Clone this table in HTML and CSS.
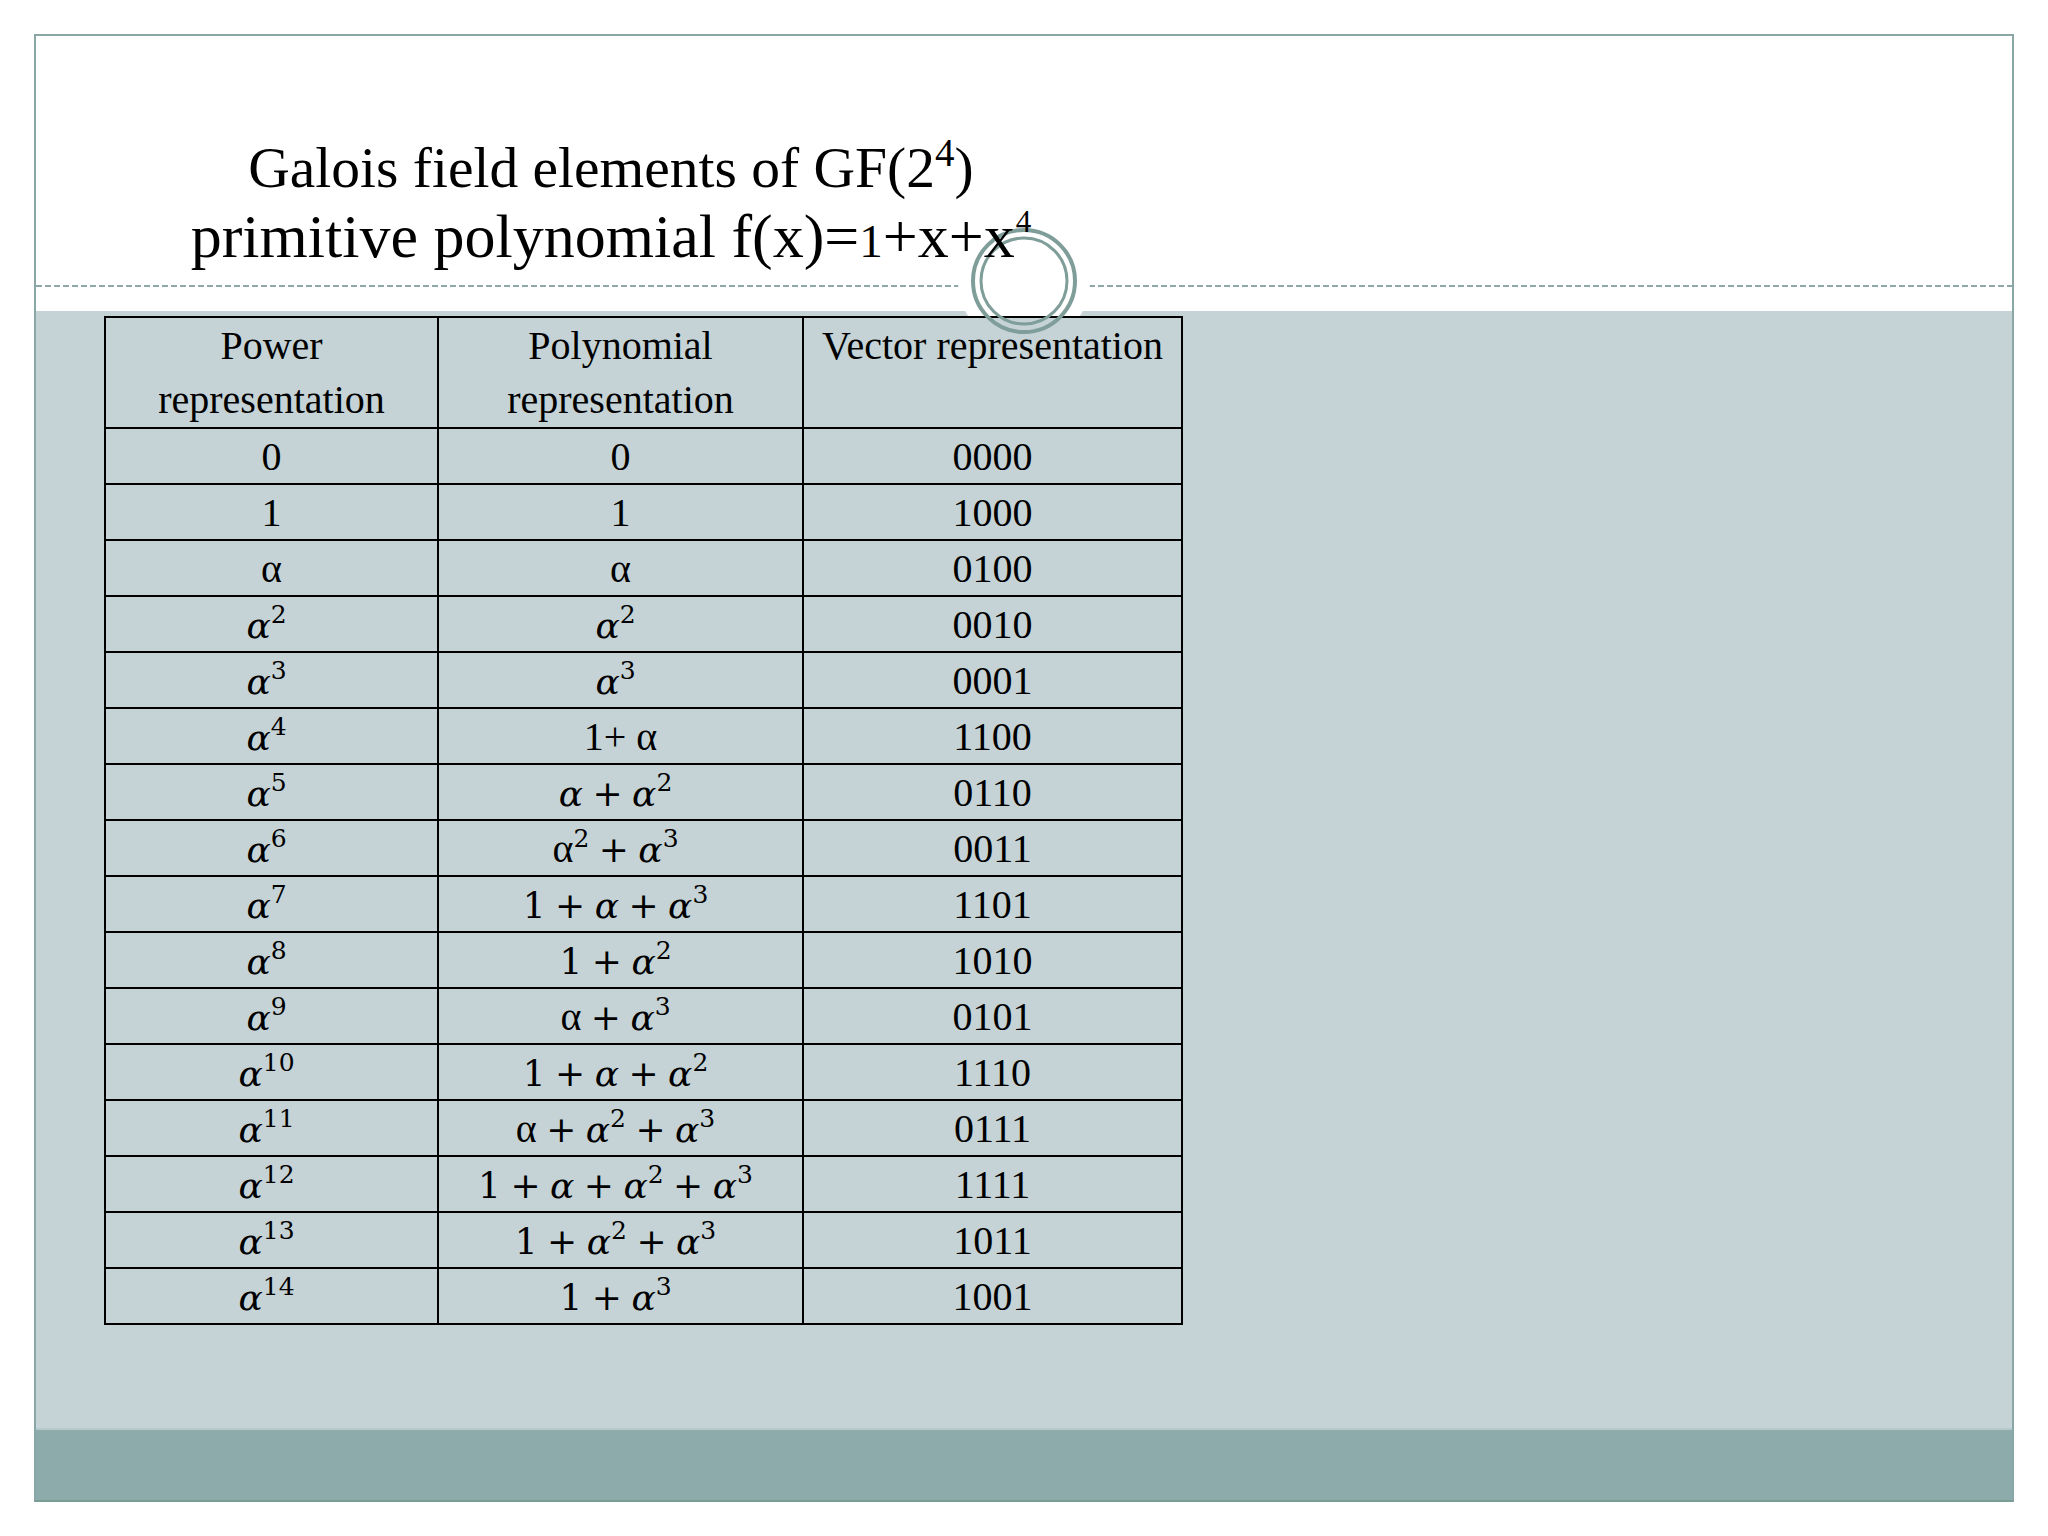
FILE: index.html
```html
<!DOCTYPE html>
<html lang="en">
<head>
<meta charset="utf-8">
<title>Galois field elements of GF(2^4)</title>
<link rel="stylesheet" href="styles.css">
</head>
<body>
<div class="slide">
  <header class="head">
    <div class="title">
      <div class="tline l1">Galois field elements of GF(2<sup class="t1">4</sup>)</div>
      <div class="tline l2">primitive polynomial f(x)=<span class="os">1</span>+x+x<sup class="t2">4</sup></div>
    </div>
    <div class="rule"></div>
  </header>
  <main class="content">
    <table class="gf">
      <colgroup><col class="c1"><col class="c2"><col class="c3"></colgroup>
      <tr class="hdr"><td>Power<br>representation</td><td>Polynomial<br>representation</td><td>Vector representation</td></tr>
      <tr><td>0</td><td>0</td><td>0000</td></tr>
      <tr><td>1</td><td>1</td><td>1000</td></tr>
      <tr><td>α</td><td>α</td><td>0100</td></tr>
      <tr><td><span class="m"><i>α</i><sup>2</sup></span></td><td><span class="m"><i>α</i><sup>2</sup></span></td><td>0010</td></tr>
      <tr><td><span class="m"><i>α</i><sup>3</sup></span></td><td><span class="m"><i>α</i><sup>3</sup></span></td><td>0001</td></tr>
      <tr><td><span class="m"><i>α</i><sup>4</sup></span></td><td>1+ α</td><td>1100</td></tr>
      <tr><td><span class="m"><i>α</i><sup>5</sup></span></td><td><span class="m"><i>α</i> + <i>α</i><sup>2</sup></span></td><td>0110</td></tr>
      <tr><td><span class="m"><i>α</i><sup>6</sup></span></td><td>α<span class="m"><sup>2</sup> + <i>α</i><sup>3</sup></span></td><td>0011</td></tr>
      <tr><td><span class="m"><i>α</i><sup>7</sup></span></td><td><span class="m">1 + <i>α</i> + <i>α</i><sup>3</sup></span></td><td>1101</td></tr>
      <tr><td><span class="m"><i>α</i><sup>8</sup></span></td><td><span class="m">1 + <i>α</i><sup>2</sup></span></td><td>1010</td></tr>
      <tr><td><span class="m"><i>α</i><sup>9</sup></span></td><td>α<span class="m"> + <i>α</i><sup>3</sup></span></td><td>0101</td></tr>
      <tr><td><span class="m"><i>α</i><sup>10</sup></span></td><td><span class="m">1 + <i>α</i> + <i>α</i><sup>2</sup></span></td><td>1110</td></tr>
      <tr><td><span class="m"><i>α</i><sup>11</sup></span></td><td>α<span class="m"> + <i>α</i><sup>2</sup> + <i>α</i><sup>3</sup></span></td><td>0111</td></tr>
      <tr><td><span class="m"><i>α</i><sup>12</sup></span></td><td><span class="m">1 + <i>α</i> + <i>α</i><sup>2</sup> + <i>α</i><sup>3</sup></span></td><td>1111</td></tr>
      <tr><td><span class="m"><i>α</i><sup>13</sup></span></td><td><span class="m">1 + <i>α</i><sup>2</sup> + <i>α</i><sup>3</sup></span></td><td>1011</td></tr>
      <tr><td><span class="m"><i>α</i><sup>14</sup></span></td><td><span class="m">1 + <i>α</i><sup>3</sup></span></td><td>1001</td></tr>
    </table>
  </main>
  <footer class="band"></footer>
  <div class="halo"></div>
  <svg class="ring" width="112" height="112" viewBox="0 0 112 112" aria-hidden="true">
    <circle cx="56" cy="56" r="51" fill="none" stroke="#7f9d99" stroke-width="4"/>
    <circle cx="56" cy="56" r="43" fill="none" stroke="#7f9d99" stroke-width="3"/>
  </svg>
</div>
</body>
</html>
```
FILE: styles.css
```css
* { box-sizing: border-box; }
html, body { margin: 0; padding: 0; background: #ffffff; }
body { font-family: "Liberation Serif", "Times New Roman", serif; color: #000; }

.slide {
  position: relative;
  margin: 34px 0 0 34px;
  width: 1980px;
  height: 1468px;
  border: 2px solid #8aa7a6;
  border-bottom-color: #779d94;
  display: flex;
  flex-direction: column;
  background: #ffffff;
}

.head {
  height: 275px;
  flex: none;
  display: flex;
  flex-direction: column;
}

.title {
  position: relative;
  z-index: 4;
  margin: 97px 0 0 68px;
  width: 1014px;
  line-height: 69px;
  text-align: center;
}
.tline { white-space: nowrap; }
.l1 { font-size: 57.5px; }
.l2 { font-size: 62px; }
.title sup { line-height: 0; }
.t1 { font-size: 39px; vertical-align: 21px; }
.t2 { font-size: 31px; vertical-align: 25px; margin-left: 1px; }
.os { font-size: 47px; }

.rule {
  margin-top: 9px;
  height: 2px;
  background: repeating-linear-gradient(90deg, #8ea8a7 0 6px, transparent 6px 9px);
}

.content {
  flex: 1;
  background: #c5d3d6;
  padding: 5px 0 0 68px;
}

.band {
  height: 72px;
  flex: none;
  background: #8eabac;
  border-top: 2px solid #b6c9cb;
}

.halo {
  position: absolute;
  z-index: 1;
  left: 922px;
  top: 179px;
  width: 132px;
  height: 132px;
  border-radius: 50%;
  background: #ffffff;
}
.ring {
  position: absolute;
  z-index: 3;
  left: 932px;
  top: 189px;
}

.gf {
  position: relative;
  z-index: 2;
  border-collapse: collapse;
  table-layout: fixed;
  width: 1077px;
  font-size: 40px;
  line-height: 52px;
}
.gf .c1 { width: 333px; }
.gf .c2 { width: 365px; }
.gf .c3 { width: 379px; }
.gf td {
  border: 2px solid #000;
  background: #c5d3d6;
  text-align: center;
  vertical-align: top;
  padding: 2px 4px 0;
  height: 56px;
  white-space: nowrap;
}
.gf .hdr td { height: 111px; line-height: 54px; padding-top: 1px; }

.m {
  font-family: "DejaVu Serif", serif;
  font-size: 36px;
  line-height: 1;
  word-spacing: -2px;
  padding-right: 10px;
}
.m i { font-style: italic; }
.m sup {
  font-size: 25px;
  line-height: 0;
  vertical-align: 15px;
}
```
